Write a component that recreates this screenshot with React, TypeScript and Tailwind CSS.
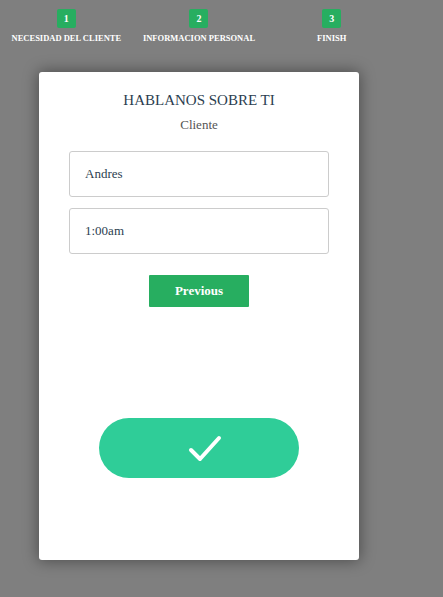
import React from "react";

const steps = ["NECESIDAD DEL CLIENTE", "INFORMACION PERSONAL", "FINISH"];

export default function App() {
  return (
    <div className="min-h-[597px] w-full bg-[#7f7f7f] font-['Liberation_Serif','Times_New_Roman',serif]">
      <div className="w-[398px]">
        {/* progreso */}
        <ul className="grid grid-cols-3 pt-[9px]">
          {steps.map((s, i) => (
            <li key={s} className="flex flex-col items-center">
              <span className="flex h-[19px] w-[19px] items-center justify-center rounded-[2px] bg-[#27ae60] text-[10px] font-bold text-white">
                {i + 1}
              </span>
              <span className="mt-[5px] text-[8.5px] leading-[10px] font-bold whitespace-nowrap text-white">
                {s}
              </span>
            </li>
          ))}
        </ul>

        {/* tarjeta */}
        <div className="mx-auto mt-[29px] flex h-[488px] w-[320px] flex-col items-center rounded-[3px] bg-white px-[30px] pt-[18px] shadow-[0_0_15px_1px_rgba(0,0,0,0.4)]">
          <h2 className="text-[15px] leading-[20px] text-[#2c3e50]">
            HABLANOS SOBRE TI
          </h2>
          <h3 className="mt-[6px] text-[13px] leading-[18px] text-[#555]">
            Cliente
          </h3>

          <div className="mt-[17px] flex w-full flex-col gap-[11px]">
            <input
              readOnly
              value="Andres"
              className="h-[46px] w-full rounded-[3px] border border-[#ccc] px-[15px] font-['Liberation_Serif',serif] text-[13px] text-[#2c3e50] outline-none"
            />
            <input
              readOnly
              value="1:00am"
              className="h-[46px] w-full rounded-[3px] border border-[#ccc] px-[15px] font-['Liberation_Serif',serif] text-[13px] text-[#2c3e50] outline-none"
            />
          </div>

          <button className="mt-[21px] h-[32px] w-[100px] rounded-[1px] bg-[#27ae60] font-['Liberation_Serif',serif] text-[13px] font-bold text-white">
            Previous
          </button>

          <div className="mt-[111px] flex h-[60px] w-[200px] items-center justify-center rounded-full bg-[#2fcd98]">
            <svg width="36" height="32" viewBox="0 0 36 32" className="ml-[12px]">
              <path
                d="M4 18 L13 27 L32 6"
                fill="none"
                stroke="white"
                strokeWidth="4"
                strokeLinecap="round"
                strokeLinejoin="round"
              />
            </svg>
          </div>
        </div>
      </div>
    </div>
  );
}
